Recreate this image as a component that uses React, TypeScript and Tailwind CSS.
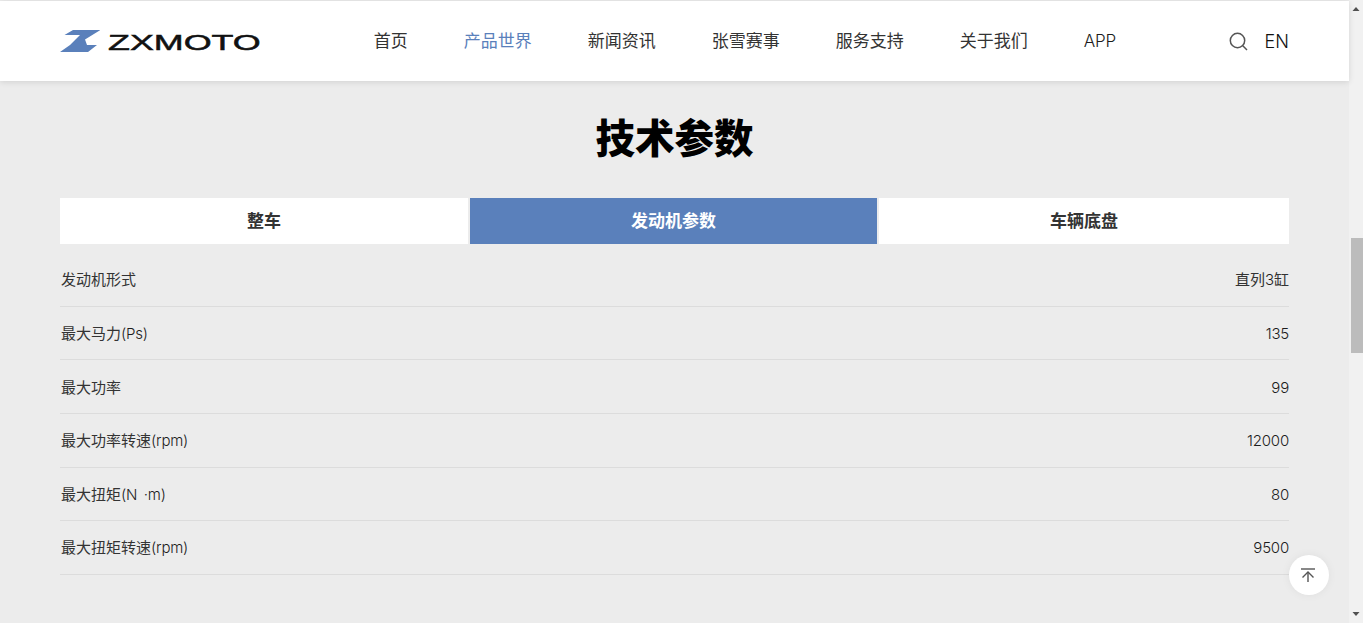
import React from "react";

const nav = ["首页", "产品世界", "新闻资讯", "张雪赛事", "服务支持", "关于我们", "APP"];
const rows = [
  ["发动机形式", "直列3缸"],
  ["最大马力(Ps)", "135"],
  ["最大功率", "99"],
  ["最大功率转速(rpm)", "12000"],
  ["最大扭矩(N \u2009·m)", "80"],
  ["最大扭矩转速(rpm)", "9500"],
];

function Mixed({ text }: { text: string }) {
  const parts = text.split(/([\x00-\x7f·\u2009]+)/).filter(Boolean);
  return (
    <span>
      {parts.map((p, i) =>
        /^[\x00-\x7f·\u2009]+$/.test(p) ? (
          <span key={i} className="font-light tracking-[-0.2px] text-[#1c1c1c]">{p}</span>
        ) : (
          <span key={i}>{p}</span>
        )
      )}
    </span>
  );
}

export default function App() {
  return (
    <div className="flex h-[623px] w-[1363px] overflow-hidden bg-[#ececec] font-['Inter','Noto_Sans_CJK_SC',sans-serif] text-[#333]">
      <div className="relative h-full w-[1349px] shrink-0">
        <header className="relative z-10 mt-px flex h-[80px] items-center justify-between bg-white px-[60px] shadow-[0_1px_6px_rgba(0,0,0,0.12)]">
          <div className="flex w-[201px] items-center gap-[8px]">
            <svg width="40" height="22" viewBox="0 0 40 22" className="shrink-0">
              <path d="M13 0H40.5L25 9.5L27 15H37L28 22H0L10 15L20 5H4.5Z" fill="#5a80bb" />
            </svg>
            <span className="mt-[3px] origin-left scale-x-[1.63] font-['Liberation_Sans',sans-serif] text-[22px] font-normal leading-none text-[#111] [-webkit-text-stroke:0.5px_#111]">ZXMOTO</span>
          </div>
          <nav className="flex gap-[56px] pt-[2px] text-[17px]">
            {nav.map((n, i) => (
              <span key={n} className={i === 1 ? "text-[#5a80bb]" : "text-[#333]"}><Mixed text={n} /></span>
            ))}
          </nav>
          <div className="flex items-center gap-[17px]">
            <svg width="19" height="19" viewBox="0 0 19 19" fill="none" stroke="#555" strokeWidth="1.5">
              <circle cx="8.5" cy="8.5" r="7.2" />
              <path d="M13.8 13.8L18 18" />
            </svg>
            <span className="text-[18px] font-light text-[#111]">EN</span>
          </div>
        </header>

        <main className="px-[60px]">
          <h1 className="mt-[30px] text-center text-[39.5px] font-black leading-[56px] text-black">技术参数</h1>
          <div className="mt-[31px] flex h-[46px] gap-[2px]">
            <div className="flex w-[408px] items-center justify-center bg-white pt-[2px] text-[17px] font-bold text-[#333]">整车</div>
            <div className="flex w-[407px] items-center justify-center bg-[#5a80bb] pt-[2px] text-[17px] font-bold text-white">发动机参数</div>
            <div className="flex w-[410px] items-center justify-center bg-white pt-[2px] text-[17px] font-bold text-[#333]">车辆底盘</div>
          </div>
          <div className="mt-[9.3px]">
            {rows.map(([k, v]) => (
              <div key={k} className="flex h-[53.6px] items-center justify-between border-b border-[#dcdcdc] pl-px pt-[2px] text-[15px] text-[#333]">
                <Mixed text={k} />
                <Mixed text={v} />
              </div>
            ))}
          </div>
        </main>

        <button className="absolute left-[1289px] top-[555px] flex h-[40px] w-[40px] items-center justify-center rounded-full bg-white pr-[2px] shadow-[0_0_10px_rgba(0,0,0,0.06)]">
          <svg width="16" height="16" viewBox="0 0 16 16" fill="none" stroke="#555" strokeWidth="1.4">
            <path d="M1 2H15" />
            <path d="M8 15V5" />
            <path d="M2.5 10.5L8 5L13.5 10.5" />
          </svg>
        </button>
      </div>

      <aside className="flex h-full w-[14px] shrink-0 flex-col items-end bg-[#f1f1f1]">
        <svg width="14" height="17" viewBox="0 0 14 17" className="shrink-0"><path d="M3.5 11L7 7L10.5 11Z" fill="#505050" /></svg>
        <div className="mt-[221px] h-[115px] w-[12px] bg-[#bcbcbc]" />
        <div className="flex-1" />
        <svg width="14" height="17" viewBox="0 0 14 17" className="shrink-0"><path d="M3.5 6L7 10L10.5 6Z" fill="#505050" /></svg>
      </aside>
    </div>
  );
}
